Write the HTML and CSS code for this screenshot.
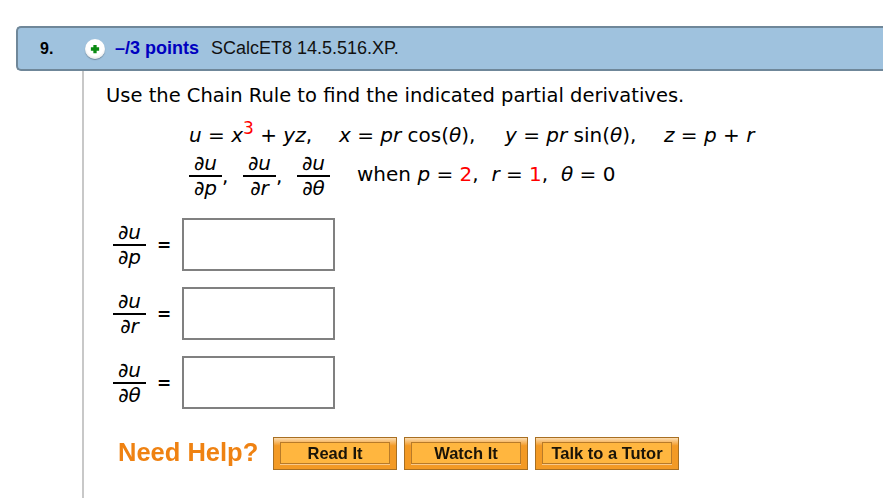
FILE: index.html
```html
<!DOCTYPE html>
<html>
<head>
  <title>Question 9</title>
  <link rel="stylesheet" href="styles.css">
</head>
<body>
  <div class="question-head">
    <span class="number">9.</span>
    <span class="plus">
      <svg width="16" height="16" viewBox="0 0 16 16"><path d="M5.800 2.500h4.400v3.300h3.300v4.400h-3.300v3.300H5.800v-3.300H2.500V5.800h3.300z" fill="#0a8a12"/></svg>
    </span>
    <span class="points">&ndash;/3 points</span>
    <span class="source">SCalcET8 14.5.516.XP.</span>
  </div>

  <div class="question-body">
    <p class="prompt">Use the Chain Rule to find the indicated partial derivatives.</p>

    <div class="givens">
      <div class="given-line">
        <span class="g1"><i>u</i> = <i>x</i><sup class="red">3</sup> + <i>yz</i>,</span>
        <span class="g2"><i>x</i> = <i>pr</i> cos(<i>&theta;</i>),</span>
        <span class="g3"><i>y</i> = <i>pr</i> sin(<i>&theta;</i>),</span>
        <span class="g4"><i>z</i> = <i>p</i> + <i>r</i></span>
      </div>
      <div class="want-line">
        <span class="frac"><span class="top">&part;<i>u</i></span><span class="bot">&part;<i>p</i></span></span><span class="comma">,</span>
        <span class="frac"><span class="top">&part;<i>u</i></span><span class="bot">&part;<i>r</i></span></span><span class="comma">,</span>
        <span class="frac"><span class="top">&part;<i>u</i></span><span class="bot">&part;<i>&theta;</i></span></span>
        <span class="when">when <i>p</i> = <span class="red">2</span>,&nbsp; <i>r</i> = <span class="red">1</span>,&nbsp; <i>&theta;</i> = 0</span>
      </div>
    </div>

    <div class="answer">
      <span class="frac"><span class="top">&part;<i>u</i></span><span class="bot">&part;<i>p</i></span></span>
      <span class="eq">=</span>
      <input class="box" type="text">
    </div>
    <div class="answer">
      <span class="frac"><span class="top">&part;<i>u</i></span><span class="bot">&part;<i>r</i></span></span>
      <span class="eq">=</span>
      <input class="box" type="text">
    </div>
    <div class="answer">
      <span class="frac"><span class="top">&part;<i>u</i></span><span class="bot">&part;<i>&theta;</i></span></span>
      <span class="eq">=</span>
      <input class="box" type="text">
    </div>

    <div class="help">
      <span class="need">Need Help?</span>
      <a class="btn btn-read"><span>Read It</span></a>
      <a class="btn btn-watch"><span>Watch It</span></a>
      <a class="btn btn-tutor"><span>Talk to a Tutor</span></a>
    </div>
  </div>
</body>
</html>
```
FILE: styles.css
```css
body {
  margin: 0;
  padding-top: 26px;
  height: 472px;
  overflow: hidden;
  background: #fff;
  color: #000;
  font-family: "DejaVu Sans", Verdana, sans-serif;
}

.question-head {
  display: flex;
  align-items: center;
  height: 41px;
  margin-left: 16px;
  background: #9fc2de;
  border: 2px solid #6f8799;
  border-right: 0;
  border-radius: 5px 0 0 5px;
  font-family: "Liberation Sans", Arial, sans-serif;
  font-size: 18px;
}

.number {
  width: 67px;
  padding-left: 22px;
  box-sizing: border-box;
  font-size: 16px;
  font-weight: bold;
}

.plus {
  display: flex;
  align-items: center;
  justify-content: center;
  width: 20px;
  height: 20px;
  border-radius: 50%;
  background: radial-gradient(circle at 50% 40%, #fff 55%, #d0d0d0 100%);
  box-shadow: 0 1px 1px #6f8799;
}

.plus svg {
  width: 12px;
  height: 12px;
}

.points {
  margin-left: 10px;
  color: #0000c0;
  font-weight: bold;
}

.source {
  margin-left: 12px;
  color: #111;
}

.question-body {
  margin-left: 82px;
  height: 430px;
  padding: 12px 0 0 22px;
  border-left: 2px solid #c8c8c8;
  box-sizing: border-box;
}

.prompt {
  margin: 0;
  font-size: 19.5px;
  line-height: 26px;
}

.givens {
  margin: 13px 0 0 83px;
  font-size: 20px;
}

.given-line {
  display: flex;
  height: 26px;
  line-height: 26px;
}

.g1 { width: 150px; }
.g2 { width: 166px; }
.g3 { width: 159px; }

sup {
  font-size: 17px;
  line-height: 0;
}

.red {
  color: #f00;
}

.want-line {
  display: flex;
  align-items: center;
  margin-top: 4px;
}

.frac {
  display: inline-flex;
  flex-direction: column;
  align-items: center;
  width: 33px;
  font-size: 20px;
  line-height: 23px;
}

.frac .top {
  width: 100%;
  text-align: center;
  border-bottom: 2px solid #000;
}

.comma {
  align-self: flex-end;
  width: 21px;
  margin-bottom: 12px;
}

.when {
  margin-left: 27px;
  margin-bottom: 5px;
}

.answer {
  display: flex;
  align-items: center;
  height: 53px;
  margin-top: 16px;
  margin-left: 7px;
}

.givens + .answer {
  margin-top: 18px;
}

.eq {
  width: 36px;
  padding-left: 11px;
  box-sizing: border-box;
  font-size: 17px;
  font-weight: bold;
}

.box {
  width: 153px;
  height: 53px;
  margin: 0;
  padding: 0;
  box-sizing: border-box;
  border: 2px solid #808080;
  background: #fff;
}

.help {
  display: flex;
  align-items: center;
  margin-top: 28px;
  margin-left: 12px;
  font-family: "Liberation Sans", Arial, sans-serif;
}

.need {
  width: 155px;
  margin-bottom: 2px;
  color: #ef8212;
  font-size: 25.5px;
  font-weight: bold;
  filter: blur(0.4px);
}

.btn {
  display: block;
  height: 33px;
  padding: 4px 6px 5px;
  margin-right: 7px;
  box-sizing: border-box;
  border: 1px solid #a86f22;
  background: linear-gradient(#fbdcb0 0, #f39a25 25%, #f39a25 100%);
}

.btn span {
  display: flex;
  align-items: center;
  justify-content: center;
  height: 100%;
  padding-top: 1px;
  box-sizing: border-box;
  border: 1px solid #b87a28;
  background: #ffb63f;
  box-shadow: 0 1px 0 #f9c98a;
  color: #1a1408;
  font-size: 16.5px;
  font-weight: bold;
  filter: blur(0.3px);
}
.btn-read { width: 124px; }
.btn-watch { width: 124px; }
.btn-tutor { width: 144px; }
```
